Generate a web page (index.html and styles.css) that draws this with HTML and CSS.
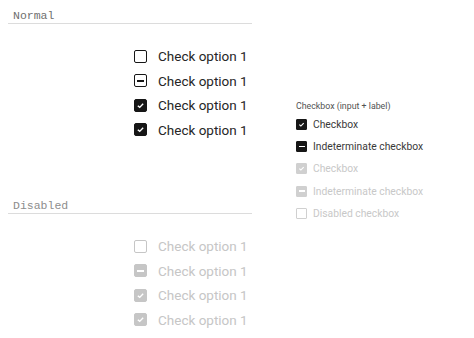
FILE: index.html
```html
<!DOCTYPE html>
<html lang="en">
<head>
  <meta charset="UTF-8" />
  <title>Checkbox</title>
  <link rel="stylesheet" href="styles.css">
</head>
<body>
  <div class="page">
    <div class="demos">
      <div class="section">
        <h2 class="section-title">Normal</h2>
        <ul class="options">
          <li class="option"><span class="box"></span>Check option 1</li>
          <li class="option"><span class="box mixed"><i class="dash"></i></span>Check option 1</li>
          <li class="option"><span class="box checked"><svg viewBox="0 0 14 14"><path d="M3.6 7.2 L6 9.4 L10.4 4.8" /></svg></span>Check option 1</li>
          <li class="option"><span class="box checked"><svg viewBox="0 0 14 14"><path d="M3.6 7.2 L6 9.4 L10.4 4.8" /></svg></span>Check option 1</li>
        </ul>
      </div>

      <div class="section disabled">
        <h2 class="section-title">Disabled</h2>
        <ul class="options">
          <li class="option"><span class="box"></span>Check option 1</li>
          <li class="option"><span class="box mixed"><i class="dash"></i></span>Check option 1</li>
          <li class="option"><span class="box checked"><svg viewBox="0 0 14 14"><path d="M3.6 7.2 L6 9.4 L10.4 4.8" /></svg></span>Check option 1</li>
          <li class="option"><span class="box checked"><svg viewBox="0 0 14 14"><path d="M3.6 7.2 L6 9.4 L10.4 4.8" /></svg></span>Check option 1</li>
        </ul>
      </div>
    </div>

    <div class="fieldset">
      <div class="legend">Checkbox (input + label)</div>
      <ul class="small-options">
        <li class="small-option"><span class="box checked"><svg viewBox="0 0 14 14"><path d="M3.6 7.2 L6 9.4 L10.4 4.8" /></svg></span>Checkbox</li>
        <li class="small-option"><span class="box mixed"><i class="dash"></i></span>Indeterminate checkbox</li>
        <li class="small-option off"><span class="box checked"><svg viewBox="0 0 14 14"><path d="M3.6 7.2 L6 9.4 L10.4 4.8" /></svg></span>Checkbox</li>
        <li class="small-option off"><span class="box mixed"><i class="dash"></i></span>Indeterminate checkbox</li>
        <li class="small-option off"><span class="box"></span>Disabled checkbox</li>
      </ul>
    </div>
  </div>
</body>
</html>
```

FILE: styles.css
```css
* {
  box-sizing: border-box;
  margin: 0;
  padding: 0;
}

body {
  font-family: 'Roboto', 'Noto Sans', sans-serif;
  background: #ffffff;
  color: #161616;
  padding: 8px;
}

.page {
  display: flex;
}

.demos {
  width: 244px;
}

.section-title {
  font-family: 'Liberation Mono', monospace;
  font-size: 11.5px;
  font-weight: 400;
  color: #6f6f6f;
  line-height: 15px;
  padding-left: 5px;
  border-bottom: 1px solid #dcdcdc;
}

.options {
  list-style: none;
  margin-top: 20px;
  padding-left: 126px;
}

.option {
  display: flex;
  align-items: center;
  height: 24.5px;
  font-size: 13.5px;
  color: #262626;
}

.box {
  width: 13px;
  height: 13px;
  border: 1.5px solid #161616;
  border-radius: 2px;
  margin-right: 11px;
  display: flex;
  align-items: center;
  justify-content: center;
  flex-shrink: 0;
}

.box svg {
  width: 13px;
  height: 13px;
  fill: none;
  stroke: #ffffff;
  stroke-width: 1.8;
}

.box.checked {
  background: #161616;
}

.dash {
  display: block;
  width: 7px;
  height: 1.5px;
  background: #161616;
}

.section.disabled {
  margin-top: 56px;
}

.disabled .section-title {
  color: #8d8d8d;
}

.disabled .option {
  color: #c6c6c6;
}

.disabled .box {
  border-color: #c6c6c6;
}

.disabled .box.checked,
.disabled .box.mixed {
  background: #c6c6c6;
}

.disabled .dash {
  background: #ffffff;
}

.fieldset {
  margin-left: 44px;
  margin-top: 91px;
}

.legend {
  font-size: 8.8px;
  color: #525252;
  height: 14px;
  line-height: 14px;
}

.small-options {
  list-style: none;
}

.small-option {
  display: flex;
  align-items: center;
  height: 22.3px;
  font-size: 10.3px;
  color: #393939;
}

.small-option .box {
  width: 11px;
  height: 11px;
  border-width: 1px;
  border-radius: 1px;
  margin-right: 6px;
}

.small-option .box svg {
  width: 11px;
  height: 11px;
}

.small-option .box.mixed {
  background: #161616;
}

.small-option .dash {
  width: 6px;
  height: 1.5px;
  background: #ffffff;
}

.small-option.off {
  color: #c8c8c8;
}

.small-option.off .box {
  border-color: #d0d0d0;
}

.small-option.off .box.checked,
.small-option.off .box.mixed {
  background: #d0d0d0;
}
```
